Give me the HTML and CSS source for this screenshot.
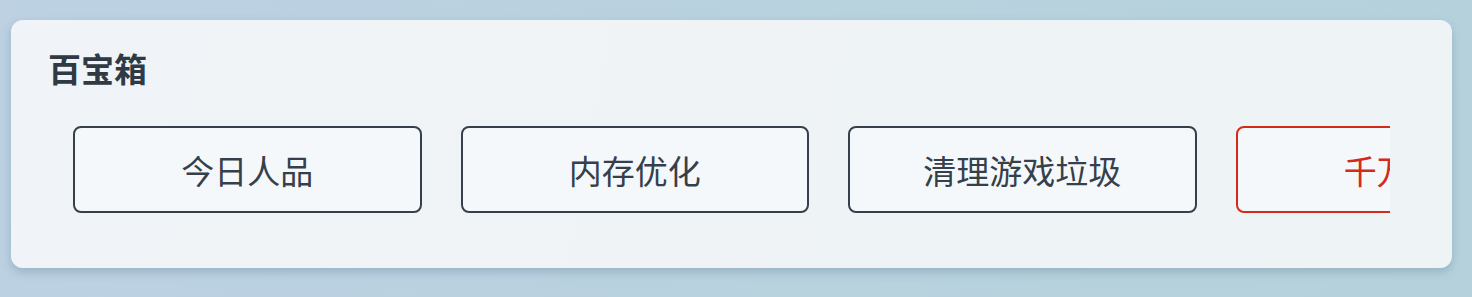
FILE: index.html
```html
<!DOCTYPE html>
<html lang="zh-CN">
<head>
<meta charset="utf-8">
<link rel="stylesheet" href="styles.css">
</head>
<body>
<section class="card">
  <h2 class="title">百宝箱</h2>
  <div class="row">
    <button class="tool">今日人品</button>
    <button class="tool">内存优化</button>
    <button class="tool">清理游戏垃圾</button>
    <button class="tool danger">千万别点</button>
  </div>
</section>
</body>
</html>
```
FILE: styles.css
```css
html, body {
  margin: 0;
  height: 100%;
}
body {
  background: linear-gradient(100deg, #bdd1e3 0%, #b9d2df 50%, #b5d2dc 100%);
  padding: 20px 20px 0 11px;
  box-sizing: border-box;
  font-family: "Noto Sans CJK SC", "Noto Sans", sans-serif;
}
.card {
  box-sizing: border-box;
  height: 248px;
  background: linear-gradient(100deg, #f0f3f7 0%, #eef3f6 100%);
  border-radius: 12px;
  box-shadow: 0 4px 10px rgba(90, 120, 145, 0.35);
  padding: 32px 62px 0 37px;
}
.title {
  margin: 0;
  font-size: 33px;
  line-height: 33px;
  font-weight: 700;
  color: #2f3a44;
}
.row {
  display: flex;
  gap: 39px;
  overflow: hidden;
  margin-top: 41px;
  padding-left: 25px;
}
.tool {
  flex: 0 0 348.5px;
  height: 87px;
  box-sizing: border-box;
  border: 2px solid #36404a;
  border-radius: 8px;
  background: #f4f8fb;
  color: #36404a;
  font-family: "Noto Sans CJK SC", "Noto Sans", sans-serif;
  font-size: 33px;
  padding: 0;
}
.tool.danger {
  border-color: #d42a1b;
  color: #d42a1b;
}
```
